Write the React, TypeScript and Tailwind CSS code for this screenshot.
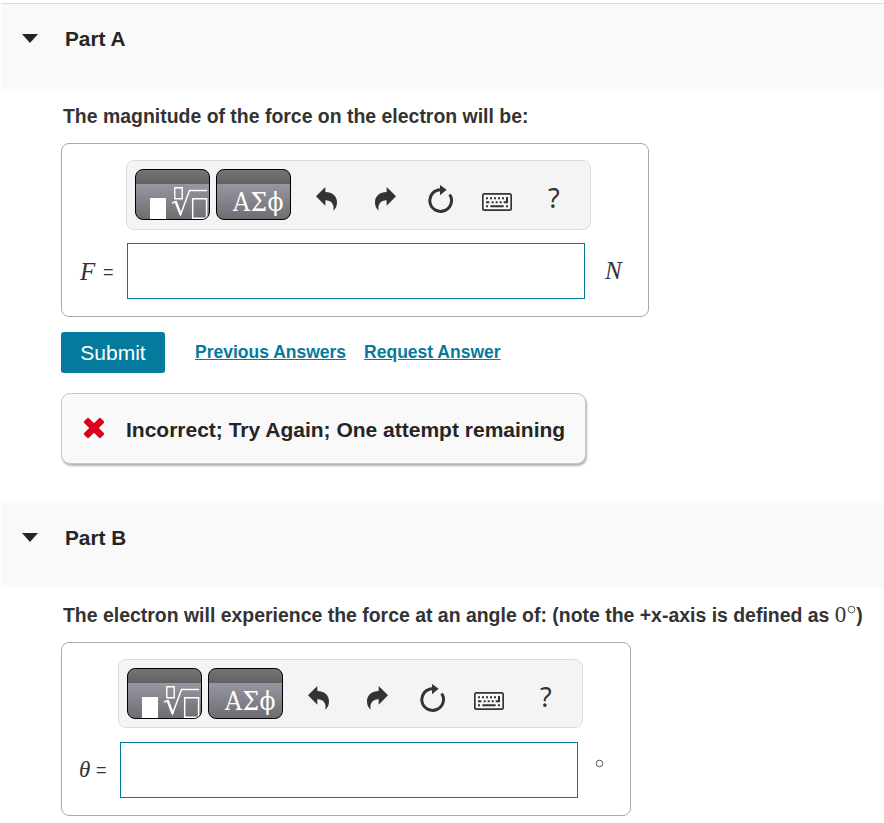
import type { ReactNode } from 'react';

export default function App() {
  return (
    <main className="h-[823px] w-[884px] overflow-hidden bg-white pl-px font-['Liberation_Sans',Arial,sans-serif] text-[#333]">
      <div className="h-[3px]" />
      <PartHeader title="Part A" className="h-[86px] border-t border-[#dcdcdc]" />

      <section className="flex h-[414px] flex-col items-start pl-[60px]">
        <Prompt>The magnitude of the force on the electron will be:</Prompt>
        <div className="mt-[13px] h-[174px] w-[588px] rounded-lg border border-[#a9a9a9] pt-4">
          <Toolbar className="ml-16 h-[70px]" />
          <div className="mt-[13px] flex h-14 items-center">
            <label className="flex w-[65px] items-start pt-0.5 pl-[18px]">
              <i className="w-[23px] font-['Liberation_Serif',serif] text-[25px] leading-7">F</i>
              <span className="text-[18px] leading-7">=</span>
            </label>
            <input className="h-14 w-[458px] border border-[#047a9c] bg-white outline-none" />
            <i className="ml-[20px] font-['Liberation_Serif',serif] text-[25px] leading-7">N</i>
          </div>
        </div>

        <div className="mt-[15px] flex h-[41px] items-center">
          <button className="h-[41px] w-[104px] rounded-[3px] bg-[#047a9c] text-[21px] text-white">Submit</button>
          <a className="ml-[30px] text-[17.5px] font-bold text-[#047a9c] underline">Previous Answers</a>
          <a className="ml-[18px] text-[17.5px] font-bold text-[#047a9c] underline">Request Answer</a>
        </div>

        <div className="mt-5 flex h-[71px] w-[525px] items-center rounded-[9px] border border-[#c7c7c7] bg-[#f9f9f9] shadow-[1px_2px_2px_#b5b5b5]">
          <svg className="mb-px ml-[21px]" width="22" height="22" viewBox="-11 -11 22 22">
            <rect x="-11.8" y="-3.4" width="23.6" height="6.8" rx="1.3" fill="#db0020" transform="rotate(45)" />
            <rect x="-11.8" y="-3.4" width="23.6" height="6.8" rx="1.3" fill="#db0020" transform="rotate(-45)" />
          </svg>
          <span className="mt-0.5 ml-[21px] text-[21px] font-bold whitespace-nowrap text-[#252525]">
            Incorrect; Try Again; One attempt remaining
          </span>
        </div>
      </section>

      <PartHeader title="Part B" className="h-[84px]" />

      <section className="flex flex-col items-start pl-[60px]">
        <Prompt>
          The electron will experience the force at an angle of: (note the +x-axis is defined as{' '}
          <span className="font-['Liberation_Serif',serif] text-[23px] font-normal">0</span>
          <DegreeRing className="mb-[14px] ml-px inline-block" />)
        </Prompt>
        <div className="mt-[14px] h-[174px] w-[570px] rounded-lg border border-[#a9a9a9] pt-4">
          <Toolbar className="ml-14 h-[69px]" />
          <div className="mt-[14px] flex h-14 items-center">
            <label className="flex w-[58px] items-start pl-[17px]">
              <i className="w-[17px] font-['Liberation_Serif',serif] text-[23px] leading-7">θ</i>
              <span className="text-[18px] leading-7">=</span>
            </label>
            <input className="h-14 w-[458px] border border-[#047a9c] bg-white outline-none" />
            <DegreeRing className="mb-[14px] ml-[17px]" />
          </div>
        </div>
      </section>
    </main>
  );
}

function PartHeader({ title, className }: { title: string; className: string }) {
  return (
    <header className={`flex items-start bg-[#f9f9f9] pl-[21px] ${className}`}>
      <svg className="mt-[30px]" width="16" height="10" viewBox="0 0 16 10">
        <path d="M0 0H16L8 9Z" fill="#252525" />
      </svg>
      <h2 className="mt-[23px] ml-[27px] text-[20.8px] leading-6 font-bold text-[#252525]">{title}</h2>
    </header>
  );
}

function Prompt({ children }: { children: ReactNode }) {
  return <p className="mt-[14px] h-[27px] pl-0.5 text-[19.45px] leading-[27px] font-bold whitespace-nowrap">{children}</p>;
}

function DegreeRing({ className }: { className: string }) {
  return (
    <svg className={className} width="9" height="9" viewBox="0 0 9 9">
      <circle cx="4.5" cy="4.5" r="3.3" fill="none" stroke="#444" strokeWidth="0.9" />
    </svg>
  );
}

function Toolbar({ className }: { className: string }) {
  return (
    <div className={`flex w-[465px] items-start rounded-lg border border-[#dcdcdc] bg-[#f4f4f4] pt-2 pl-2 ${className}`}>
      <PaletteButton>
        <svg width="73" height="49" viewBox="0 0 73 49" fill="none" stroke="white">
          <path d="M14 28H30V49H14Z" fill="white" stroke="none" />
          <path d="M38.8 17.8H46.2V28.8H38.8Z" strokeWidth="1.4" />
          <path d="M36 33L40 31.5L44.6 44.5L53.5 20.5H71" strokeWidth="1.5" />
          <path d="M39.8 32L44.6 44.5" strokeWidth="2.4" />
          <path d="M56.7 28.7H70.6V48.2H56.7Z" strokeWidth="1.5" />
        </svg>
      </PaletteButton>
      <PaletteButton className="ml-1.5">
        <span className="mt-[18px] ml-4 font-['DejaVu_Serif_Condensed','DejaVu_Serif',serif] text-[26px] leading-[29px] tracking-[0.5px] text-white">
          ΑΣϕ
        </span>
      </PaletteButton>

      {/* undo / redo */}
      <svg className="mt-[18px] ml-[25px]" width="21" height="24" viewBox="0 0 63 72">
        <path d={ARROW} fill="#333" />
      </svg>
      <svg className="mt-[18px] ml-[38px] -scale-x-100" width="21" height="24" viewBox="0 0 63 72">
        <path d={ARROW} fill="#333" />
      </svg>

      {/* reset */}
      <svg className="mt-4 ml-8" width="25" height="28" viewBox="0 0 75 84">
        <path d="M37.5 14A32.5 32.5 0 1 0 65 28.5" fill="none" stroke="#333" strokeWidth="9" />
        <path d="M36 0L56 14.5L36 31Z" fill="#333" />
      </svg>

      {/* keyboard */}
      <svg className="mt-6 ml-[29px]" width="30" height="18" viewBox="0 0 90 54">
        <rect x="2.5" y="2.5" width="85" height="49" rx="5" fill="#f8f8f8" stroke="#333" strokeWidth="5" />
        <path
          d="M12 15.5H18M24 15.5H30M36 15.5H42M48 15.5H54M60 15.5H66M12 27.5H22M29 27.5H35M41 27.5H47M53 27.5H59M65 27.5H78M75 12V29M12 39.5H18M25 39.5H65M72 39.5H78"
          stroke="#333"
          strokeWidth="6"
        />
      </svg>
      <span className="mt-[10px] ml-[36px] font-['Noto_Sans',sans-serif] text-[27px] leading-[37px] text-[#333]">?</span>
    </div>
  );
}

const ARROW = 'M0 28L28 0V15C48 15 63 26 63 46C63 58 59 65 52 71C55 57 50 40 28 40V56Z';

function PaletteButton({ children, className = '' }: { children: ReactNode; className?: string }) {
  return (
    <button
      className={`flex h-[51px] w-[75px] items-start overflow-hidden rounded-lg border border-black bg-[linear-gradient(#747474_0px,#626262_14px,#9896a2_14px,#6e6d71_49px)] ${className}`}
    >
      {children}
    </button>
  );
}
